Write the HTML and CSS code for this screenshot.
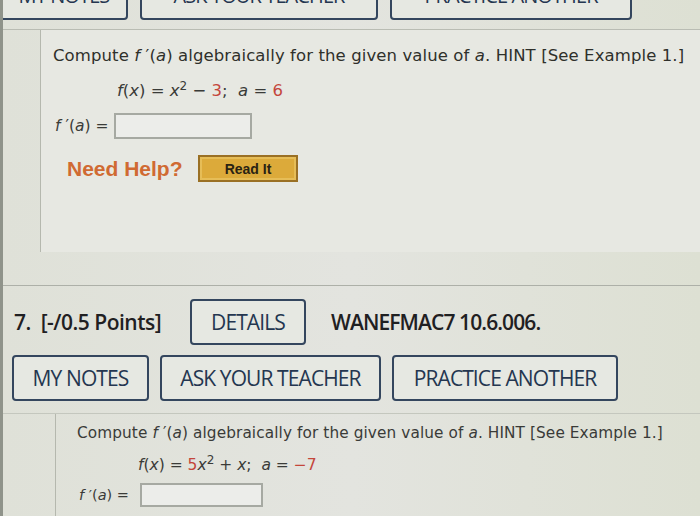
FILE: index.html
```html
<!DOCTYPE html>
<html>
<head>
<meta charset="utf-8">
<link rel="stylesheet" href="styles.css">
</head>
<body>
<div class="page">
  <div class="tabs tabs-top">
    <div class="btn btn-a">MY NOTES</div>
    <div class="btn btn-b">ASK YOUR TEACHER</div>
    <div class="btn btn-c">PRACTICE ANOTHER</div>
  </div>
  <div class="rule rule-top"></div>
  <div class="qbox qbox1">
    <p class="prompt">Compute <i>f</i> ′(<i>a</i>) algebraically for the given value of <i>a</i>. HINT [See Example 1.]</p>
    <p class="formula"><i>f</i>(<i>x</i>) = <i>x</i><sup>2</sup> − <span class="red">3</span>;&nbsp; <i>a</i> = <span class="red">6</span></p>
    <div class="answer"><span class="label"><i>f</i> ′(<i>a</i>) =</span><span class="input"></span></div>
    <div class="help"><span class="need">Need Help?</span><span class="readit">Read It</span></div>
  </div>
  <div class="rule rule-mid"></div>
  <div class="qhead">
    <span class="qnum">7.&nbsp; [-/0.5 Points]</span>
    <span class="btn btn-details">DETAILS</span>
    <span class="qcode">WANEFMAC7 10.6.006.</span>
  </div>
  <div class="tabs tabs-row">
    <div class="btn btn-1">MY NOTES</div>
    <div class="btn btn-2">ASK YOUR TEACHER</div>
    <div class="btn btn-3">PRACTICE ANOTHER</div>
  </div>
  <div class="rule rule-low"></div>
  <div class="qbox qbox2">
    <p class="prompt prompt2">Compute <i>f</i> ′(<i>a</i>) algebraically for the given value of <i>a</i>. HINT [See Example 1.]</p>
    <p class="formula formula2"><i>f</i>(<i>x</i>) = <span class="red">5</span><i>x</i><sup>2</sup> + <i>x</i>;&nbsp; <i>a</i> = <span class="red">−7</span></p>
    <div class="answer answer2"><span class="label"><i>f</i> ′(<i>a</i>) =</span><span class="input input2"></span></div>
  </div>
</div>
</body>
</html>
```
FILE: styles.css
```css
html, body {
  margin: 0;
  padding: 0;
}
body {
  width: 700px;
  height: 516px;
  overflow: hidden;
  background: #dcdfd4;
  color: #2f3030;
}
.page {
  width: 700px;
  height: 516px;
  overflow: hidden;
  background: linear-gradient(90deg, #dfe1d8 0%, #e3e4df 50%, #dde0d3 100%);
  border-left: 3px solid #8f938a;
  box-sizing: border-box;
}
.btn {
  box-sizing: border-box;
  border: 2px solid #34465e;
  border-radius: 4px;
  font-family: "Open Sans", sans-serif;
  color: #243650;
  display: flex;
  align-items: center;
  justify-content: center;
  background: #e6e8e2;
  letter-spacing: -0.9px;
}
.tabs {
  display: flex;
}
.tabs-top {
  margin-top: -30px;
  height: 50px;
}
.tabs-top .btn {
  height: 50px;
  font-size: 20px;
}
.btn-a { width: 128px; margin-left: -3px; }
.btn-b { width: 238px; margin-left: 12px; }
.btn-c { width: 242px; margin-left: 12px; }
.rule {
  height: 1px;
  background: #b9bcb3;
}
.rule-top { margin-top: 9px; }
.qbox {
  box-sizing: border-box;
  border-left: 1px solid #b5b8ae;
}
.qbox1 {
  margin-left: 37px;
  height: 222px;
  padding: 15px 0 0 12px;
  background: #e7e8e2;
}
.prompt {
  margin: 0;
  font-family: "DejaVu Sans", Verdana, sans-serif;
  font-size: 16.5px;
  line-height: 22px;
  color: #2f302b;
  letter-spacing: 0.1px;
}
.formula {
  margin: 13px 0 0 64px;
  font-family: "DejaVu Sans", Verdana, sans-serif;
  font-size: 16.5px;
  line-height: 22px;
  color: #3a3b38;
}
.formula sup {
  font-size: 12px;
  line-height: 0;
}
.red { color: #c4463b; }
.answer {
  display: flex;
  align-items: center;
  margin-top: 11px;
  margin-left: 2px;
  font-family: "DejaVu Sans", Verdana, sans-serif;
  font-size: 15.5px;
  color: #3a3b38;
}
.label { width: 59px; }
.input {
  display: block;
  width: 138px;
  height: 26px;
  box-sizing: border-box;
  border: 2px solid #a6a9a2;
  background: #ecedea;
}
.help {
  display: flex;
  align-items: center;
  margin-top: 16px;
  margin-left: 14px;
}
.need {
  font-family: "Liberation Sans", Arial, sans-serif;
  font-weight: bold;
  font-size: 21px;
  color: #d06a32;
  width: 131px;
}
.readit {
  box-sizing: border-box;
  width: 100px;
  height: 27px;
  display: flex;
  align-items: center;
  justify-content: center;
  background: #dcaa3a;
  border: 2px solid #9a7024;
  box-shadow: inset 0 0 0 2px #e6bd57;
  font-family: "Liberation Sans", Arial, sans-serif;
  font-weight: bold;
  font-size: 14px;
  color: #2a2313;
}
.rule-mid { margin-top: 33px; background: #adb0a8; }
.qhead {
  display: flex;
  align-items: center;
  margin-top: 13px;
  height: 46px;
  font-family: "Open Sans", sans-serif;
  font-size: 21px;
  font-weight: 600;
  color: #1f2022;
}
.qnum {
  margin-left: 11px;
  width: 176px;
  letter-spacing: -0.5px;
}
.btn-details {
  width: 116px;
  height: 46px;
  font-size: 21px;
  font-weight: 400;
}
.qcode {
  margin-left: 25px;
  letter-spacing: -0.9px;
}
.tabs-row {
  margin-top: 10px;
  height: 46px;
}
.tabs-row .btn {
  height: 46px;
  font-size: 21px;
}
.btn-1 { width: 137px; margin-left: 9px; }
.btn-2 { width: 221px; margin-left: 11px; }
.btn-3 { width: 226px; margin-left: 11px; }
.rule-low { margin-top: 12px; background: #c4c7be; }
.qbox2 {
  margin-left: 52px;
  height: 120px;
  padding: 9px 0 0 21px;
}
.prompt2 {
  font-size: 15.3px;
  line-height: 21px;
  color: #3a3b38;
}
.formula2 {
  margin: 10px 0 0 61px;
  font-size: 15.5px;
}
.answer2 {
  margin-top: 7px;
  font-size: 14.5px;
}
.answer2 .label { width: 61px; }
.input2 {
  width: 123px;
  height: 24px;
}
```
